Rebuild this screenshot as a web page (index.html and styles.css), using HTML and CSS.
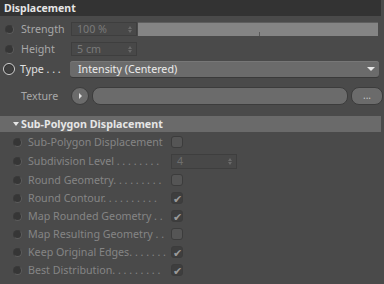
FILE: index.html
```html
<html>
  <head>
    <title>Displacement</title>
    <link rel="stylesheet" href="styles.css">
  </head>
  <body>
    <div class="panel">
      <div class="head">Displacement</div>

      <div class="row first">
        <span class="radio"></span>
        <span class="label">Strength</span>
        <span class="num">100 %<span class="spin"></span></span>
        <span class="slider"><span class="tick"></span></span>
      </div>
      <div class="row">
        <span class="radio"></span>
        <span class="label">Height</span>
        <span class="num">5 cm<span class="spin"></span></span>
      </div>
      <div class="row">
        <span class="radio big"></span>
        <span class="label bright">Type . . .</span>
        <span class="drop">Intensity (Centered)<span class="arrow"></span></span>
      </div>
      <div class="row tex">
        <span class="label indent">Texture</span>
        <span class="play"><span class="tri"></span></span>
        <span class="link"></span>
        <span class="more">...</span>
      </div>

      <div class="sub"><span class="down"></span>Sub-Polygon Displacement</div>

      <div class="opts">
        <div class="opt"><span class="radio"></span><span class="olabel">Sub-Polygon Displacement</span><span class="box"></span></div>
        <div class="opt tall"><span class="radio"></span><span class="olabel">Subdivision Level . . . . . . . .</span><span class="num small">4<span class="spin"></span></span></div>
        <div class="opt"><span class="radio"></span><span class="olabel">Round Geometry. . . . . . . . .</span><span class="box"></span></div>
        <div class="opt"><span class="radio"></span><span class="olabel">Round Contour. . . . . . . . . .</span><span class="box on">&#10004;</span></div>
        <div class="opt"><span class="radio"></span><span class="olabel">Map Rounded Geometry . .</span><span class="box on">&#10004;</span></div>
        <div class="opt"><span class="radio"></span><span class="olabel">Map Resulting Geometry . .</span><span class="box"></span></div>
        <div class="opt"><span class="radio"></span><span class="olabel">Keep Original Edges. . . . . . .</span><span class="box on">&#10004;</span></div>
        <div class="opt"><span class="radio"></span><span class="olabel">Best Distribution. . . . . . . . .</span><span class="box on">&#10004;</span></div>
      </div>
    </div>
  </body>
</html>
```

FILE: styles.css
```css
body { margin: 0; background-color: #4a4a4a;
       font-family: "Noto Sans", "Open Sans", sans-serif; font-size: 10.7px; }

.panel { width: 384px; height: 284px; overflow: hidden; }

.head { height: 16px; width: 381px; background-color: #333333; color: #e6e6e6;
        font-weight: bold; font-size: 10.5px; line-height: 16px; padding-left: 4px;
        box-sizing: border-box; }

.row { display: flex; align-items: center; height: 16px; margin-top: 4px; }
.row.first { margin-top: 5px; }
.row.tex { height: 18px; margin-top: 10px; }

.radio { width: 7px; height: 7px; border-radius: 50%; margin: 0 7px 0 5px; flex: none;
         background-color: #363636; border: 1px solid #5c5c5c;
         border-top-color: #3a3a3a; border-left-color: #3a3a3a; }
.radio.big { width: 10px; height: 10px; margin: 0 5px 0 3px; border: 1px solid #d0d0d0;
             background: #3f3f3f; box-shadow: inset 0 0 0 1px #2e2e2e; }

.label { width: 50px; color: #a8a8a8; flex: none; white-space: nowrap; }
.label.bright { color: #e0e0e0; }
.label.indent { margin-left: 21px; }

.num { position: relative; width: 66px; height: 14px; box-sizing: border-box;
       border: 1px solid #3e3e3e; background-color: #484848; color: #7a7a7a;
       padding-left: 5px; line-height: 12px; flex: none; }
.spin { position: absolute; right: 4px; top: 3px; width: 0; height: 0;
        border-left: 2px solid transparent; border-right: 2px solid transparent;
        border-bottom: 3px solid #6a6a6a; }
.spin::after { content: ""; position: absolute; left: -2px; top: 4px; width: 0; height: 0;
        border-left: 2px solid transparent; border-right: 2px solid transparent;
        border-top: 3px solid #6a6a6a; }

.slider { position: relative; width: 240px; height: 14px; background-color: #848484;
          border-top: 1px solid #5e5e5e; box-sizing: border-box; margin-left: 1px; }
.tick { position: absolute; left: 121px; bottom: 0; width: 1px; height: 4px; background: #5a5a5a; }

.drop { position: relative; width: 309px; height: 16px; background-color: #6b6b6b;
        border-radius: 3px; color: #ececec; line-height: 16px;
        padding-left: 8px; box-sizing: border-box; box-shadow: inset 0 1px 0 #777, 0 1px 0 #3a3a3a; }
.arrow { position: absolute; right: 4px; top: 6px; width: 0; height: 0;
         border-left: 4px solid transparent; border-right: 4px solid transparent;
         border-top: 4px solid #e8e8e8; }

.play { width: 16px; height: 16px; border-radius: 50%; background-color: #6b6b6b;
        border: 1px solid #3c3c3c; display: flex; align-items: center; justify-content: center;
        flex: none; }
.tri { width: 0; height: 0; border-top: 3px solid transparent; border-bottom: 3px solid transparent;
       border-left: 3px solid #e0e0e0; margin-left: 1px; }
.link { width: 254px; height: 16px; border-radius: 8px; background-color: #6b6b6b;
        border: 1px solid #3c3c3c; margin-left: 3px; flex: none; }
.more { width: 30px; height: 16px; border-radius: 8px; background-color: #6b6b6b;
        border: 1px solid #3c3c3c; margin-left: 3px; color: #c8c8c8; text-align: center;
        line-height: 14px; font-size: 10px; flex: none; }

.sub { height: 16px; width: 381px; margin-top: 11px; background-color: #6a6a6a; color: #e6e6e6;
       font-weight: bold; line-height: 16px; display: flex; align-items: center; }
.down { width: 0; height: 0; border-left: 3px solid transparent; border-right: 3px solid transparent;
        border-top: 4px solid #e6e6e6; margin: 0 2px 0 13px; }

.opts { padding-top: 1px; }
.opt { display: flex; align-items: center; height: 18px; }
.opt.tall { height: 20px; }
.opt .radio { margin: 0 6px 0 13px; }
.olabel { width: 143px; color: #858585; white-space: nowrap; overflow: hidden; flex: none; }

.box { width: 12px; height: 12px; border-radius: 3px; background-color: #555555;
       border: 1px solid #3c3c3c; box-sizing: border-box; color: #9a9a9a;
       font-size: 11px; line-height: 11px; text-align: center; }
.box.on { background-color: #3e3e3e; }
.num.small { height: 15px; color: #6e6e6e; }
```
